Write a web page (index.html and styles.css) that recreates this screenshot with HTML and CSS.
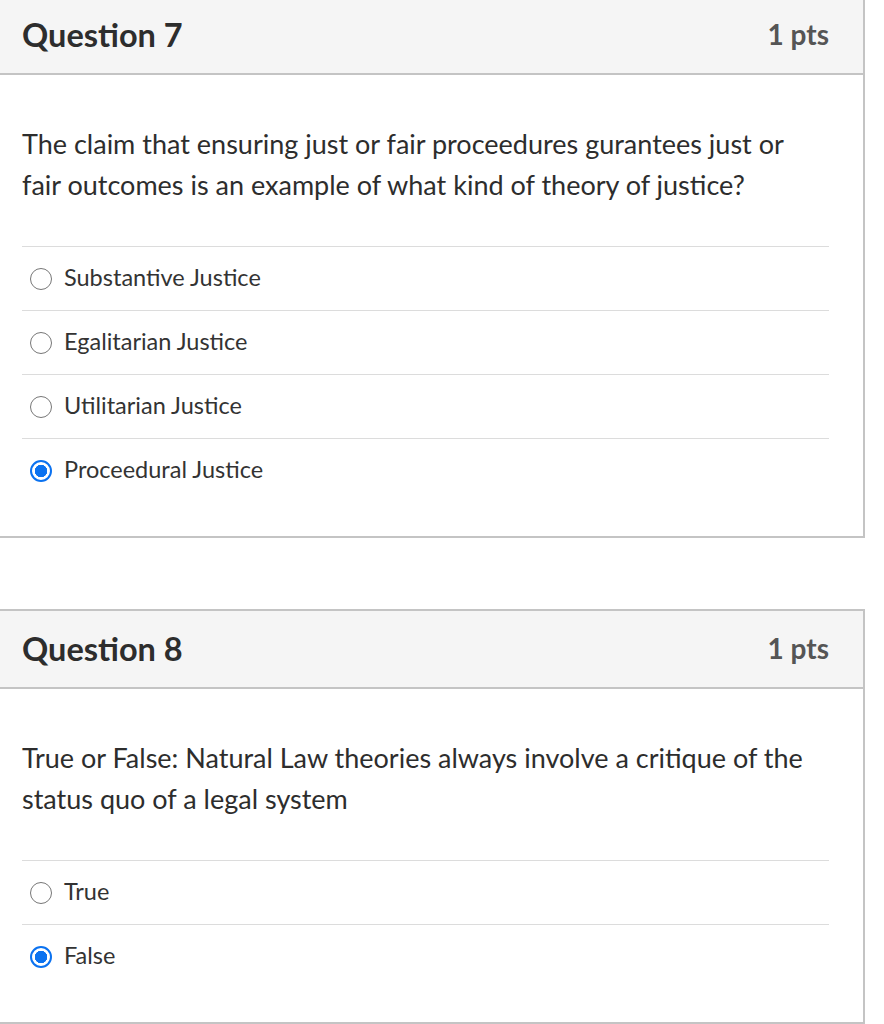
FILE: index.html
```html
<!DOCTYPE html>
<html lang="en">
<head>
    <meta charset="UTF-8">
    <meta name="viewport" content="width=device-width, initial-scale=1.0">
    <title>Quiz</title>
    <link rel="stylesheet" href="styles.css">
</head>
<body>
    <div class="quiz">
        <div class="question first">
            <div class="question-header">
                <h2>Question 7</h2>
                <span class="points">1 pts</span>
            </div>
            <div class="question-body">
                <p class="question-text">The claim that ensuring just or fair proceedures gurantees just or fair outcomes is an example of what kind of theory of justice?</p>
                <div class="answers">
                    <label class="answer"><span class="radio"></span><span>Substantive Justice</span></label>
                    <label class="answer"><span class="radio"></span><span>Egalitarian Justice</span></label>
                    <label class="answer"><span class="radio"></span><span>Utilitarian Justice</span></label>
                    <label class="answer"><span class="radio checked"></span><span>Proceedural Justice</span></label>
                </div>
            </div>
        </div>

        <div class="question">
            <div class="question-header">
                <h2>Question 8</h2>
                <span class="points">1 pts</span>
            </div>
            <div class="question-body">
                <p class="question-text">True or False: Natural Law theories always involve a critique of the status quo of a legal system</p>
                <div class="answers">
                    <label class="answer"><span class="radio"></span><span>True</span></label>
                    <label class="answer"><span class="radio checked"></span><span>False</span></label>
                </div>
            </div>
        </div>
    </div>
</body>
</html>
```

FILE: styles.css
```css
body {
    margin: 0;
    font-family: 'Lato', 'Noto Sans', sans-serif;
    color: #2d2d2d;
    background: white;
    overflow: hidden;
}

.quiz {
    margin-left: -14px;
    width: 879px;
}

.question {
    border: 2px solid #c4c4c4;
    margin-bottom: 71px;
}

.question.first {
    margin-top: -5px;
}

.question-header {
    background-color: #f5f5f5;
    border-bottom: 2px solid #c4c4c4;
    height: 76px;
    padding: 0 34px;
    display: flex;
    align-items: center;
    justify-content: space-between;
}

.question-header h2 {
    margin: 0 0 2px;
    font-size: 32.5px;
    font-weight: 700;
    color: #2d2d2d;
}

.points {
    margin-bottom: 2px;
    font-size: 28px;
    font-weight: 700;
    color: #555;
}

.question-body {
    padding: 48px 34px 34px;
}

.question-text {
    margin: 0 0 41px;
    max-width: 790px;
    font-size: 27px;
    line-height: 41px;
}

.answer {
    display: flex;
    align-items: center;
    height: 63px;
    border-top: 1px solid #dcdcdc;
    padding-left: 8px;
    gap: 12px;
    font-size: 23.5px;
    color: #333;
}

.answer span:last-child {
    margin-top: -3px;
}

.radio {
    width: 22px;
    height: 22px;
    box-sizing: border-box;
    border: 1.5px solid #777;
    border-radius: 50%;
    flex-shrink: 0;
}

.radio.checked {
    border: 2px solid #0b72f0;
    background: radial-gradient(circle, #0b72f0 6px, white 6.5px);
}
```
